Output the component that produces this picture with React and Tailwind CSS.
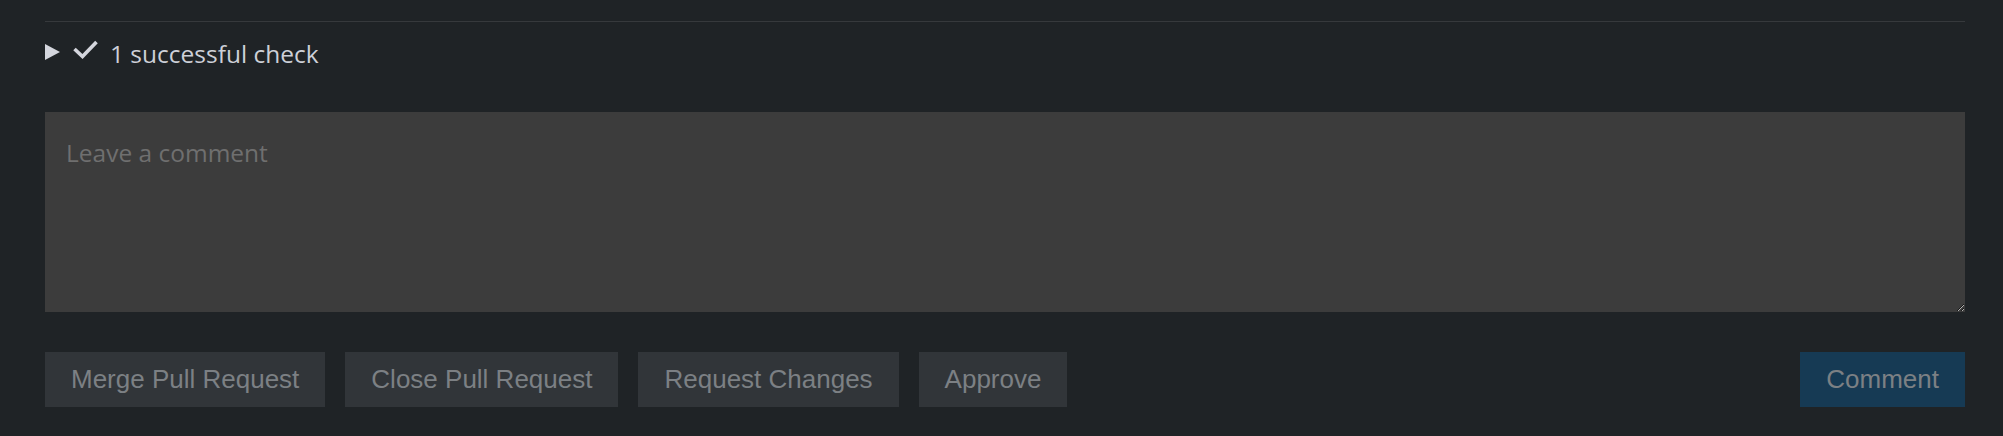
import React from 'react';

const ACTIONS = ['Merge Pull Request', 'Close Pull Request', 'Request Changes', 'Approve'];

const ChecksSummary = () => (
    <div className="flex items-center h-[40px] mt-[12px]">
        {/* Disclosure triangle */}
        <svg width="15" height="16" viewBox="0 0 15 16" className="shrink-0 -mt-[4px]">
            <polygon points="0,0 15,8 0,16" fill="#d4d6dd" />
        </svg>
        {/* Check mark */}
        <svg width="25" height="19" viewBox="0 0 25 19" className="shrink-0 ml-[13px] -mt-[10px]">
            <polyline points="1.5,9 9.5,16.5 23.5,2" fill="none" stroke="#d4d6dd" strokeWidth="3.6" />
        </svg>
        <span className="ml-[12px] text-[24.5px] text-[#cdd0d8] font-['Open_Sans',sans-serif]">
            1 successful check
        </span>
    </div>
);

export default function App() {
    return (
        <div className="w-full h-[436px] bg-[#1f2326] pl-[45px] pr-[38px] pt-[21px]">
            <div className="border-t border-[#36393c]" />

            <ChecksSummary />

            {/* Comment box */}
            <textarea
                placeholder="Leave a comment"
                className="block w-full h-[200px] mt-[38px] bg-[#3c3c3c] text-[#cccccc] placeholder:text-[#6f6f6f] text-[24.5px] leading-[36px] font-['Open_Sans',sans-serif] pt-[23px] px-[21px] outline-none border-0 resize-y"
            />

            {/* Actions */}
            <div className="flex items-center gap-[20px] mt-[40px]">
                {ACTIONS.map((label) => (
                    <button
                        key={label}
                        className="h-[55px] px-[26px] bg-[#313539] text-[#7c8084] text-[26px] font-['Liberation_Sans',Arial,sans-serif] whitespace-nowrap"
                    >
                        {label}
                    </button>
                ))}
                <button className="ml-auto h-[55px] px-[26px] bg-[#163a54] text-[#7c8084] text-[26px] font-['Liberation_Sans',Arial,sans-serif]">
                    Comment
                </button>
            </div>
        </div>
    );
}
